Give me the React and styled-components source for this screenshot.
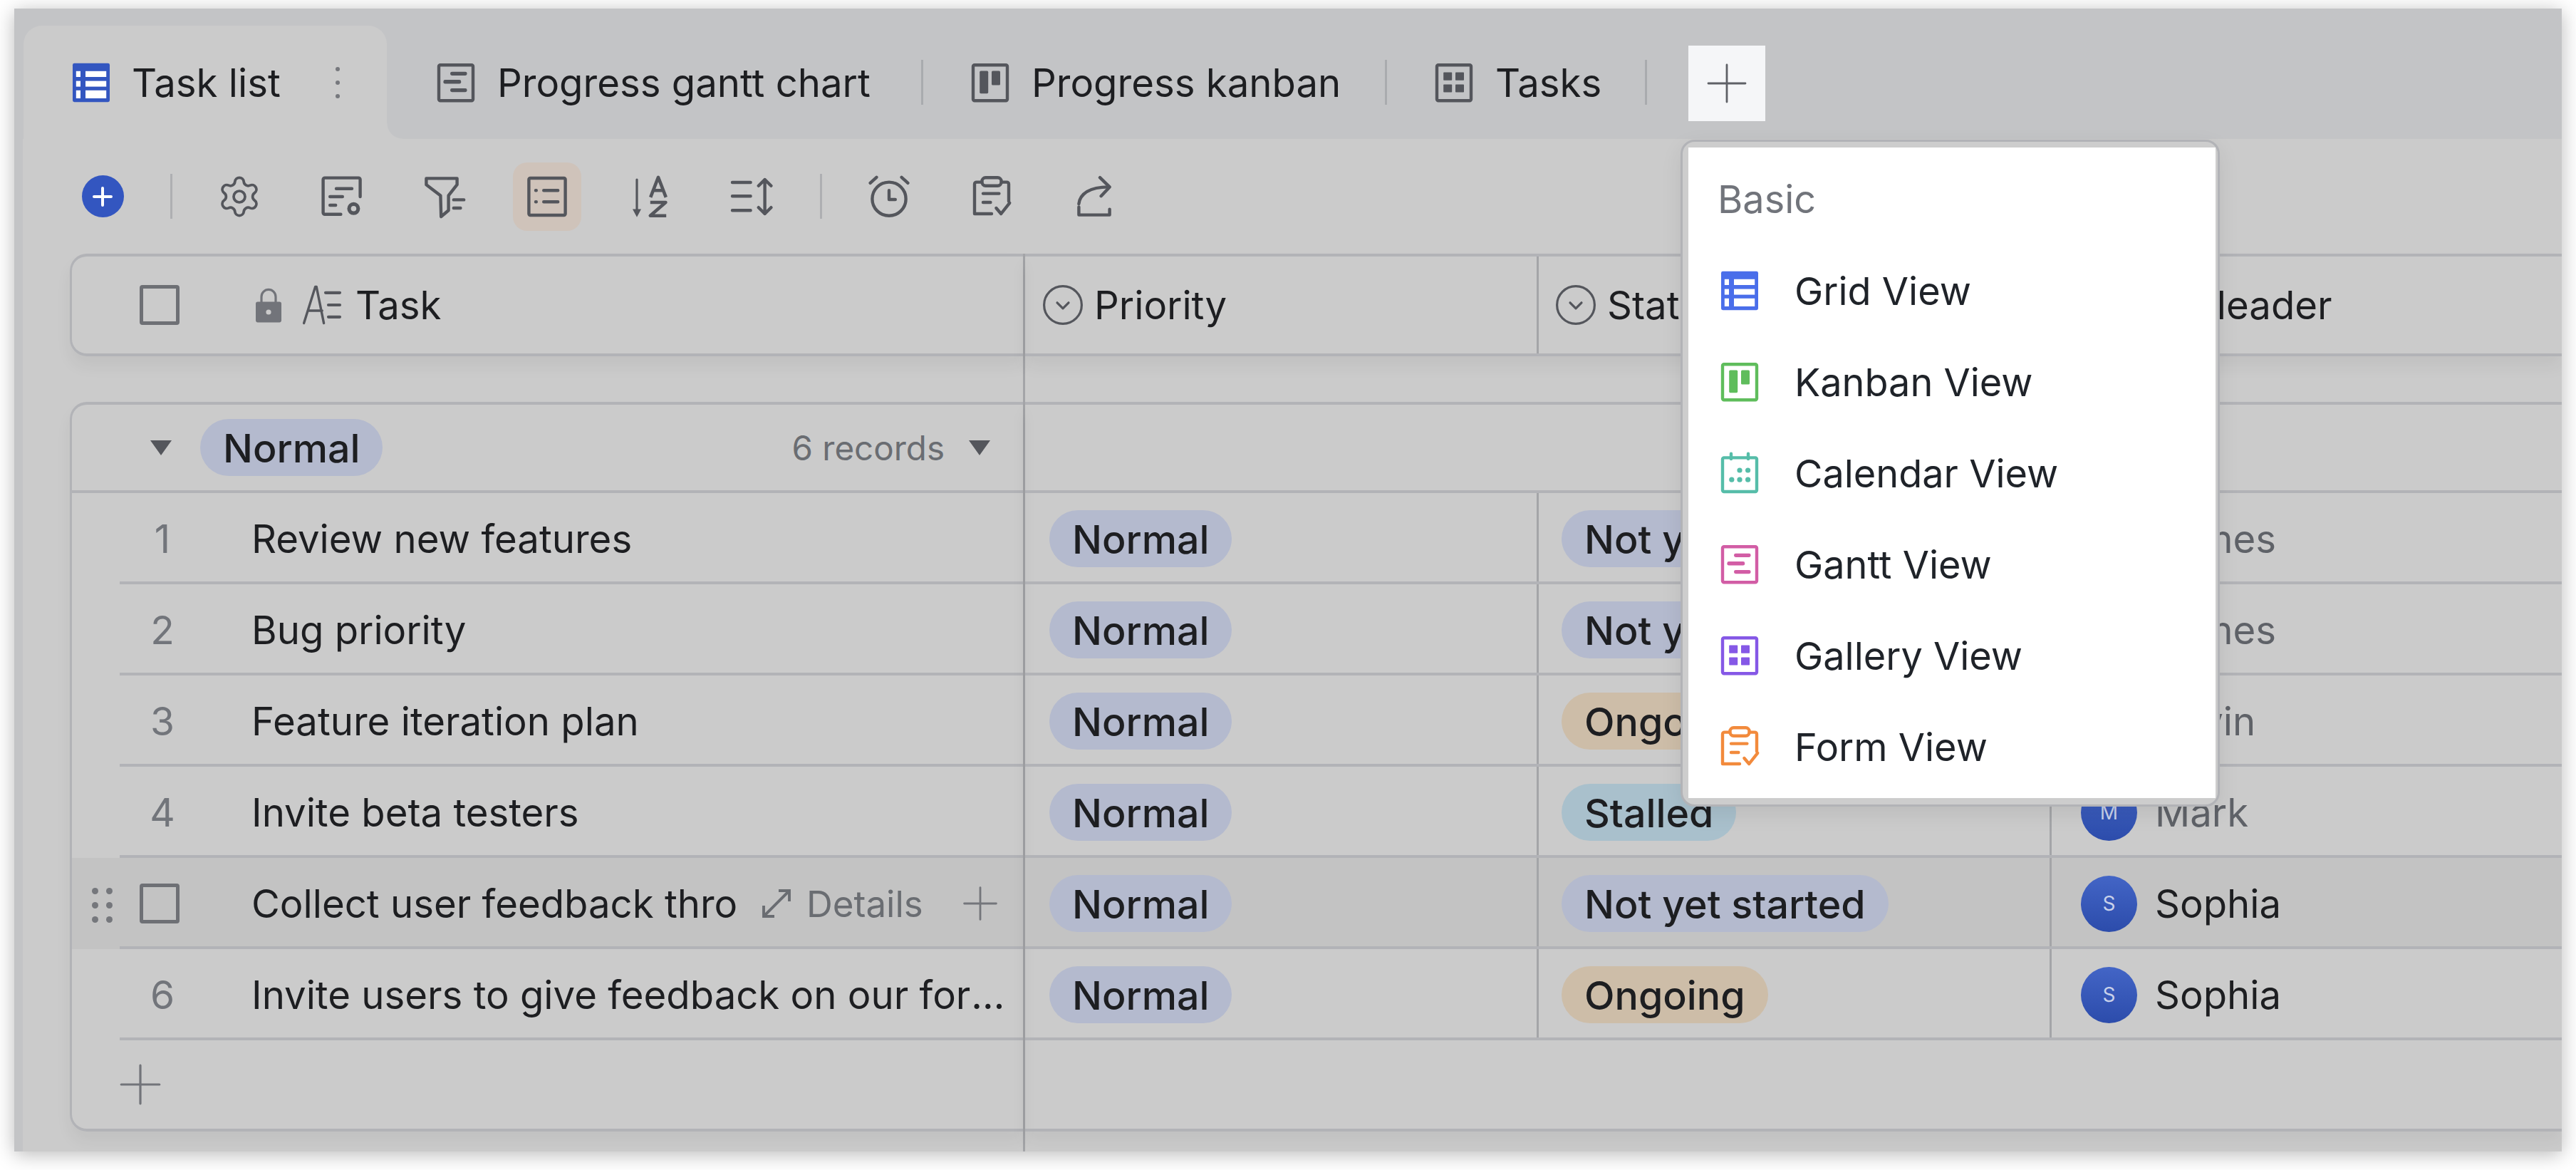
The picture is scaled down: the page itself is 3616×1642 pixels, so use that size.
import React from 'react';
import styled, { createGlobalStyle } from 'styled-components';
import { Settings } from 'lucide-react';

const Global = createGlobalStyle`
  html, body { margin: 0; padding: 0; background: #fff; }
  * { box-sizing: border-box; }
  body { min-height: 1642px; font-family: Inter, "Liberation Sans", sans-serif; color: #1d1e21; }
  #root { padding-top: 12px; }
`;

const INK = '#54565c';
const LINE = '#b2b3b7';
const VLINE = '#a4a5a8';
const BG = '#cbcbcb';

const Window = styled.div`
  position: relative; margin: 0 0 0 20px; width: 3576px; height: 1604px;
  background: ${BG}; overflow: hidden;
  box-shadow: 0 4px 26px rgba(0,0,0,.28);
`;
const Rail = styled.div`
  height: 100%; display: flex; flex-direction: column;
  background: linear-gradient(#c3c4c6, #c3c4c6) left / 12px 100% no-repeat;
`;
const TabBar = styled.div`
  height: 183px; flex: none; background: #c3c4c6; display: flex; align-items: flex-start; padding-left: 13px;
`;
const ActiveTab = styled.div`
  position: relative; width: 510px; height: 159px; margin: 24px 3px 0 0; background: ${BG};
  border-radius: 26px 26px 0 0; display: flex; align-items: center; padding-left: 63px; gap: 25px;
  &::after {
    content: ''; position: absolute; left: 100%; bottom: 0; width: 22px; height: 22px;
    background: radial-gradient(circle at 100% 0, transparent 21px, ${BG} 22px);
  }
`;
const Tab = styled.div`
  width: ${p => p.$w}px; height: 159px; margin-top: 24px; display: flex; align-items: center;
  padding-left: 62px; gap: 26px;
`;
const TabLabel = styled.span`
  font-size: 54.5px; line-height: 64px; white-space: nowrap;
`;
const TabDivider = styled.div`
  width: 3px; height: 63px; margin-top: 72px; background: #a9abae;
`;
const PlusButton = styled.div`
  width: 108px; height: 106px; margin: 52px 0 0 58px; background: #f5f6f8;
  display: flex; align-items: center; justify-content: center;
`;
const Kebab = styled.div`
  margin-left: 52px; display: flex; flex-direction: column; gap: 13px;
  & > i { display: block; width: 6px; height: 6px; border-radius: 50%; background: #76787d; }
`;

const Toolbar = styled.div`
  height: 161px; flex: none; display: flex; align-items: center; gap: 48px; padding-left: 76px;
`;
const ToolButton = styled.div`
  width: 96px; height: 96px; display: flex; align-items: center; justify-content: center;
  border-radius: 20px; background: ${p => (p.$active ? '#cfc3ba' : 'transparent')};
`;
const ToolDivider = styled.div`
  width: 3px; height: 63px; margin: 0 -1.5px; background: #aeafb2;
`;
const AddCircle = styled.div`
  width: 59px; height: 59px; border-radius: 50%; background: #3356c0;
  display: flex; align-items: center; justify-content: center;
`;

const Table = styled.div`
  flex: 1; min-height: 0; display: flex; margin-left: 78px;
`;
const FrozenPane = styled.div`
  width: 1341px; flex: none; border-right: 3px solid ${VLINE}; display: flex; flex-direction: column;
`;
const DataPane = styled.div`
  flex: 1; min-width: 0; display: flex; flex-direction: column;
`;
const Head = styled.div`
  height: 144px; flex: none; display: flex; align-items: center;
  border-top: 4px solid ${LINE}; border-bottom: 4px solid ${LINE};
  ${p => p.$frozen ? `border-left: 3px solid ${LINE}; border-radius: 24px 0 0 24px; padding-left: 95px;` : ''}
  box-shadow: 0 14px 22px rgba(0,0,0,.05);
`;
const HeadCell = styled.div`
  width: ${p => p.$w || 720}px; flex: none; height: 100%; display: flex; align-items: center;
  gap: ${p => p.$gap || 12}px; padding-left: ${p => p.$pad || 20}px;
  border-right: ${p => (p.$last ? 'none' : `3px solid ${VLINE}`)};
  font-size: 54.5px; white-space: nowrap;
`;
const HeadIcon = styled.div`
  margin: 0 2px 0 6px; display: flex;
`;
const Gap = styled.div`
  height: 64px; flex: none;
`;
const Group = styled.div`
  display: flex; flex-direction: column; flex: none;
  border-top: 4px solid ${LINE}; border-bottom: 4px solid ${LINE};
  ${p => p.$frozen ? `border-left: 3px solid ${LINE}; border-radius: 24px 0 0 24px;` : ''}
  box-shadow: 0 14px 22px rgba(0,0,0,.05);
`;
const GroupHead = styled.div`
  height: 124px; flex: none; display: flex; align-items: center; border-bottom: 4px solid ${LINE};
  padding-left: ${p => (p.$frozen ? 108 : 0)}px; padding-right: 44px;
`;
const Count = styled.span`
  margin-left: auto; font-size: 47.5px; color: #6a6d72; margin-right: 32px;
`;
const Caret = styled.svg`
  width: 34px; height: 24px; flex: none; fill: ${INK};
`;
const Row = styled.div`
  height: 128px; flex: none; display: flex; background: ${p => (p.$hover ? '#c3c3c3' : 'transparent')};
`;
const Gutter = styled.div`
  width: 67px; flex: none; display: flex; align-items: center; justify-content: flex-end;
  padding: 4px 10px 0 0;
`;
const DragDots = styled.div`
  display: grid; grid-template-columns: 9px 9px; gap: 11px 11px;
  & > i { display: block; width: 9px; height: 9px; border-radius: 50%; background: #75777c; }
`;
const RowBody = styled.div`
  flex: 1; min-width: 0; display: flex; align-items: center; border-bottom: 4px solid ${LINE}; padding-top: 4px;
`;
const NumCell = styled.div`
  width: 120px; flex: none; text-align: center; color: #72757b; font-size: 55px;
  display: flex; justify-content: center;
`;
const TaskText = styled.div`
  margin-left: 65px; width: ${p => p.$w || 1058}px; font-size: 54.5px; white-space: nowrap; overflow: hidden;
  text-overflow: ${p => (p.$clip ? 'clip' : 'ellipsis')};
`;
const Details = styled.div`
  display: flex; align-items: center; gap: 18px; margin-left: 30px; font-size: 51px; color: #6a6d72;
`;
const RowPlus = styled.div`
  margin-left: 52px; display: flex;
`;
const Checkbox = styled.div`
  width: 56px; height: 56px; flex: none; border: 5px solid #6e7075; border-radius: 4px;
  margin-right: ${p => p.$shift || 0}px;
`;
const AddRow = styled.div`
  height: 124px; flex: none; display: flex; align-items: center; padding-left: 64px;
`;
const DataRow = styled(Row)`
  border-bottom: 4px solid ${LINE};
`;
const DataCell = styled.div`
  width: ${p => p.$w || 720}px; flex: none; height: 100%; display: flex; align-items: center;
  padding: 4px 0 0 ${p => p.$pad || 32}px; gap: 25px; white-space: nowrap;
  border-right: ${p => (p.$last ? 'none' : `3px solid ${VLINE}`)};
`;
const Pill = styled.span`
  display: inline-flex; align-items: center; height: 80px; padding: 0 32px; border-radius: 40px;
  font-size: 55.5px; font-weight: 500; background: ${p => p.$bg}; color: #1d1e21; white-space: nowrap;
  margin-left: ${p => p.$ml || 0}px;
`;
const Avatar = styled.div`
  width: 79px; height: 79px; flex: none; border-radius: 50%;
  background: linear-gradient(#4365c6, #2c4cab); color: #c8d1ea; font-size: 28px;
  display: flex; align-items: center; justify-content: center;
`;
const Name = styled.span`
  font-size: 54.5px; color: ${p => (p.$dim ? '#5f6268' : '#1d1e21')};
`;
const AddRowSpacer = styled.div`
  height: 124px; flex: none;
`;

const Popup = styled.div`
  position: absolute; left: 2339px; top: 184px; width: 757px; height: 936px;
  border: 3px solid ${LINE}; border-radius: 20px; background: #cdcdcd; padding: 8px 3px 8px 8px;
  box-shadow: 0 10px 30px rgba(0,0,0,.08);
`;
const PopupInner = styled.div`
  background: #fff; width: 740px; height: 913px; padding: 45px 0 8px;
`;
const PopupLabel = styled.div`
  font-size: 54px; line-height: 56px; color: #71747b; padding: 0 0 36px 41px;
`;
const PopupItem = styled.div`
  height: 128px; display: flex; align-items: center; gap: 45px; padding-left: 40px;
  font-size: 54px; color: #1f2329;
`;

const IconSvg = styled.svg`
  width: ${p => p.$s || 64}px; height: ${p => p.$s || 64}px; flex: none; display: block;
`;
const I = ({ c = INK, s = 64, w = 1.1, children }) => (
  <IconSvg $s={s} viewBox="0 0 16 16" fill="none" stroke={c} strokeWidth={w} strokeLinecap="round" strokeLinejoin="round">{children}</IconSvg>
);

const GridIcon = ({ c }) => (
  <I c={c}>
    <rect x="1.5" y="1.2" width="13" height="13.6" rx=".6" fill={c} stroke="none" />
    {[[3.95, 2.05], [7.4, 2], [10.7, 2.8]].map(([y, h]) => (
      <React.Fragment key={y}>
        <rect x="2.7" y={y} width="1.55" height={h} fill="#fff" stroke="none" />
        <rect x="6" y={y} width="7.3" height={h} fill="#fff" stroke="none" />
      </React.Fragment>
    ))}
  </I>
);
const Frame = () => <rect x="2" y="1.8" width="12" height="12.5" rx=".5" />;
const GanttIcon = ({ c = INK }) => (
  <I c={c}><Frame />
    <g fill={c} stroke="none">
      <rect x="6" y="4.2" width="5.9" height="1.3" rx=".6" />
      <rect x="3.6" y="7" width="6.2" height="1.4" rx=".6" />
      <rect x="6" y="10" width="5.9" height="1.3" rx=".6" />
    </g>
  </I>
);
const KanbanIcon = ({ c = INK }) => (
  <I c={c}><Frame />
    <g fill={c} stroke="none">
      <rect x="4.3" y="3.9" width="3" height="7.9" rx=".4" />
      <rect x="8.5" y="3.9" width="3" height="5" rx=".4" />
    </g>
  </I>
);
const GalleryIcon = ({ c = INK }) => (
  <I c={c}><Frame />
    <g fill={c} stroke="none">
      <rect x="4.3" y="4.4" width="3" height="2.8" rx=".2" />
      <rect x="8.5" y="4.4" width="3" height="2.8" rx=".2" />
      <rect x="4.3" y="8.6" width="3" height="2.8" rx=".2" />
      <rect x="8.5" y="8.6" width="3" height="2.8" rx=".2" />
    </g>
  </I>
);
const CalendarIcon = ({ c }) => (
  <I c={c}>
    <rect x="2" y="2.6" width="12" height="11.9" rx=".5" />
    <path d="M5 1.2v1.8M11 1.2v1.8" />
    <g fill={c} stroke="none">
      <circle cx="8" cy="7" r=".9" /><circle cx="10.9" cy="7" r=".9" />
      <circle cx="5.2" cy="10.3" r=".9" /><circle cx="8" cy="10.3" r=".9" /><circle cx="10.9" cy="10.3" r=".9" />
    </g>
  </I>
);
const FormIcon = ({ c = INK }) => (
  <I c={c}>
    <path d="M4.6 2.9H2.7a.7.7 0 0 0-.7.7V14h6" />
    <path d="M11.4 2.9h1.9a.7.7 0 0 1 .7.7V9.6" />
    <rect x="4.6" y="1.3" width="6.8" height="2.9" rx="1.3" />
    <path d="M5 6.9h5.6M5 10h2.6" />
    <path d="M9.6 12l1.7 2 3-3.8" />
  </I>
);
const PlusIcon = ({ s = 64, c = '#5f6167', w = .7, inset = 1.5 }) => (
  <I s={s} c={c} w={w}><path d={`M${inset} 8H${16 - inset}M8 ${inset}V${16 - inset}`} /></I>
);
const DocGear = () => (
  <I>
    <path d="M7.6 14.2H2a.6.6 0 0 1-.6-.6V2a.6.6 0 0 1 .6-.6h11.8a.6.6 0 0 1 .6.6v6" />
    <path d="M6 5.2h5.5M3.8 8h4.4M3.8 11h2" />
    <circle cx="12.1" cy="12.2" r="1.6" strokeWidth="1.3" />
  </I>
);
const FilterIcon = () => (
  <I>
    <path d="M1.6 1.6h10.8v2.2L9.4 7.6v5.2L6.8 15l-.2-7.4L1.6 3.8z" />
    <path d="M11.2 9.1h3.6M11.2 12h2.4" />
  </I>
);
const ListBox = () => (
  <I>
    <rect x="1.6" y="1.5" width="12.8" height="13" rx=".5" />
    <path d="M6.8 5.8h5M6.8 9.8h5" />
    <path d="M4 5.8h.2M4 9.8h.2" />
  </I>
);
const SortIcon = () => (
  <I w={1.15}>
    <path d="M3.5 2v12" strokeWidth=".8" />
    <path d="M2 12.4h3L3.5 15.2z" fill={INK} stroke="none" />
    <path d="M8.3 8.2 11 1.2l2.7 7M9.3 5.8h3.4" strokeLinecap="butt" />
    <path d="M8.2 10h5.4l-5.4 4.7h5.6" strokeLinecap="butt" />
  </I>
);
const LineHeight = () => (
  <I>
    <path d="M1 3h6.4M1 7.8h6.4M1 12.8h6.4" />
    <path d="M12.4 2v12M10.2 4.2 12.4 2l2.2 2.2M10.2 11.8l2.2 2.2 2.2-2.2" />
  </I>
);
const AlarmIcon = () => (
  <I>
    <circle cx="8" cy="8.8" r="5.9" />
    <path d="M8 5.8v3.2h2.2M1.4 3.2l2.2-2M14.6 3.2l-2.2-2" />
  </I>
);
const ShareIcon = () => (
  <I>
    <path d="M2.6 14.4V11.6M2.6 14.4h10.8v-2" />
    <path d="M2.6 10.5C3 7 6.4 4.6 13 4.6" />
    <path d="M10 1.3l3.4 3.3-3 3.2" />
  </I>
);
const LockIcon = () => (
  <IconSvg $s={52} viewBox="0 0 13 13">
    <path d="M4 5.6V3.6a2.5 2.5 0 0 1 5 0v2" fill="none" stroke="#72747a" strokeWidth=".8" />
    <rect x="2" y="5.4" width="9" height="7.2" rx=".7" fill="#72747a" />
    <circle cx="6.5" cy="9" r=".9" fill="#cbcbcb" />
  </IconSvg>
);
const TextFieldIcon = () => (
  <I s={64} w={.85} c="#55575d">
    <path d="M1.4 14.4 5.4 1.6h.4l2.6 12.8M2.8 10h5" />
    <path d="M9 3.7h5M10 8h4M10 12.2h4" strokeWidth="1.05" />
  </I>
);
const ChevronCircle = () => (
  <I s={64} w={.8}>
    <circle cx="8" cy="8" r="6.6" />
    <path d="M6 7.2 8 9.2l2-2" />
  </I>
);
const ExpandIcon = () => (
  <I s={48} c="#6a6d72" w={1.3}>
    <path d="M2 14 14 2M9 2h5v5M2 9v5h5" strokeLinecap="butt" strokeLinejoin="miter" />
  </I>
);

const TriangleDown = () => (
  <Caret viewBox="0 0 32 24"><path d="M1 2h30L16 23z" /></Caret>
);

const leaders = [
  ['J', 'James', true], ['J', 'James', true], ['K', 'Kevin', true],
  ['M', 'Mark', true], ['S', 'Sophia', false], ['S', 'Sophia', false],
];
const statuses = [
  ['Not yet started', '#b4bace'], ['Not yet started', '#b4bace'], ['Ongoing', '#cdbda8'],
  ['Stalled', '#a9c0cc'], ['Not yet started', '#b4bace'], ['Ongoing', '#cdbda8'],
];
const tasks = [
  'Review new features', 'Bug priority', 'Feature iteration plan', 'Invite beta testers',
  'Collect user feedback through surveys', 'Invite users to give feedback on our forms',
];
const menu = [
  ['Grid View', <GridIcon c="#4a6eea" />],
  ['Kanban View', <KanbanIcon c="#5fbd5c" />],
  ['Calendar View', <CalendarIcon c="#56bda9" />],
  ['Gantt View', <GanttIcon c="#d25da5" />],
  ['Gallery View', <GalleryIcon c="#8558e6" />],
  ['Form View', <FormIcon c="#f28a3c" />],
];

export default function App() {
  return (
    <>
      <Global />
      <Window>
        <Rail>
          <TabBar>
            <ActiveTab>
              <GridIcon c="#3356c0" />
              <TabLabel>Task list</TabLabel>
              <Kebab><i /><i /><i /></Kebab>
            </ActiveTab>
            <Tab $w={747}><GanttIcon /><TabLabel>Progress gantt chart</TabLabel></Tab>
            <TabDivider />
            <Tab $w={648}><KanbanIcon /><TabLabel>Progress kanban</TabLabel></Tab>
            <TabDivider />
            <Tab $w={362}><GalleryIcon /><TabLabel>Tasks</TabLabel></Tab>
            <TabDivider />
            <PlusButton><PlusIcon /></PlusButton>
          </TabBar>
          <Toolbar>
            <ToolButton><AddCircle><PlusIcon s={32} c="#fff" w={2} inset={2} /></AddCircle></ToolButton>
            <ToolDivider />
            <ToolButton><Settings size={64} strokeWidth={1.4} color={INK} /></ToolButton>
            <ToolButton><DocGear /></ToolButton>
            <ToolButton><FilterIcon /></ToolButton>
            <ToolButton $active><ListBox /></ToolButton>
            <ToolButton><SortIcon /></ToolButton>
            <ToolButton><LineHeight /></ToolButton>
            <ToolDivider />
            <ToolButton><AlarmIcon /></ToolButton>
            <ToolButton><FormIcon /></ToolButton>
            <ToolButton><ShareIcon /></ToolButton>
          </Toolbar>
          <Table>
            <FrozenPane>
              <Head $frozen>
                <Checkbox />
                <HeadCell $last $w={400} $pad={99} $gap={0}>
                  <LockIcon />
                  <HeadIcon><TextFieldIcon /></HeadIcon>
                  <span>Task</span>
                </HeadCell>
              </Head>
              <Gap />
              <Group $frozen>
                <GroupHead $frozen>
                  <TriangleDown />
                  <Pill $bg="#b4bace" $ml={38}>Normal</Pill>
                  <Count>6 records</Count>
                  <TriangleDown />
                </GroupHead>
                {tasks.map((t, i) => (
                  <Row key={t} $hover={i === 4}>
                    <Gutter>{i === 4 && <DragDots>{Array.from({ length: 6 }, (_, k) => <i key={k} />)}</DragDots>}</Gutter>
                    <RowBody>
                      <NumCell>{i === 4 ? <Checkbox $shift={8} /> : i + 1}</NumCell>
                      {i === 4 ? (
                        <>
                          <TaskText $w={683} $clip>{t}</TaskText>
                          <Details><ExpandIcon />Details</Details>
                          <RowPlus><PlusIcon s={56} c="#74767b" w={.8} inset={1.6} /></RowPlus>
                        </>
                      ) : (
                        <TaskText>{t}</TaskText>
                      )}
                    </RowBody>
                  </Row>
                ))}
                <AddRow><PlusIcon s={64} c="#72747a" w={.8} inset={1.3} /></AddRow>
              </Group>
            </FrozenPane>
            <DataPane>
              <Head>
                <HeadCell $w={721} $pad={21}><ChevronCircle /><span>Priority</span></HeadCell>
                <HeadCell><ChevronCircle /><span>Status</span></HeadCell>
                <HeadCell $last $pad={96}><span>Task leader</span></HeadCell>
              </Head>
              <Gap />
              <Group>
                <GroupHead />
                {tasks.map((t, i) => (
                  <DataRow key={t} $hover={i === 4}>
                    <DataCell $w={721} $pad={34}><Pill $bg="#b4bace">Normal</Pill></DataCell>
                    <DataCell><Pill $bg={statuses[i][1]}>{statuses[i][0]}</Pill></DataCell>
                    <DataCell $last $pad={41}>
                      <Avatar>{leaders[i][0]}</Avatar>
                      <Name $dim={leaders[i][2]}>{leaders[i][1]}</Name>
                    </DataCell>
                  </DataRow>
                ))}
                <AddRowSpacer />
              </Group>
            </DataPane>
          </Table>
        </Rail>
        <Popup>
          <PopupInner>
            <PopupLabel>Basic</PopupLabel>
            {menu.map(([label, icon]) => (
              <PopupItem key={label}>{icon}<span>{label}</span></PopupItem>
            ))}
          </PopupInner>
        </Popup>
      </Window>
    </>
  );
}
